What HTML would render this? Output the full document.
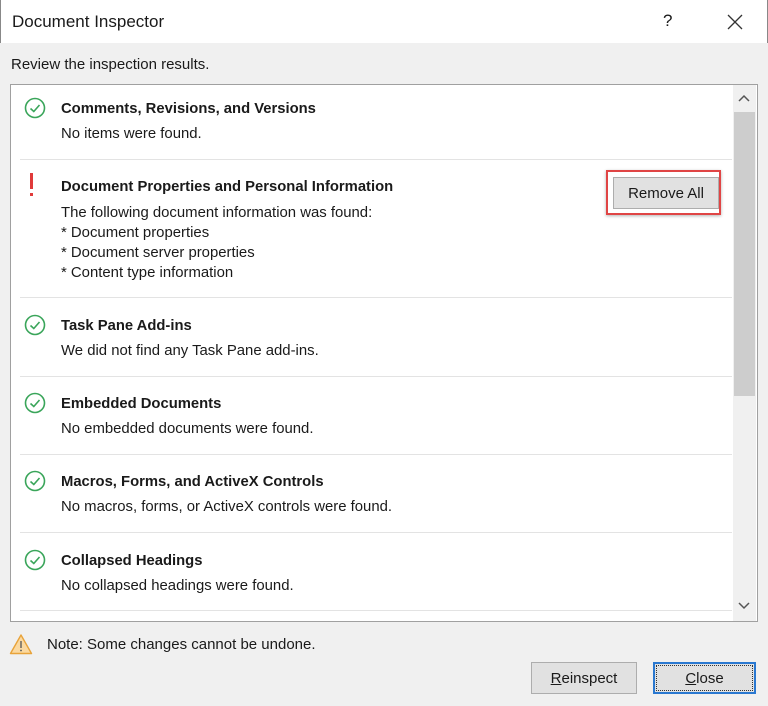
<!DOCTYPE html>
<html><head><style>
body{margin:0;width:768px;height:706px;background:#f0f0f0;font-family:"Liberation Sans",sans-serif;color:#1a1a1a;position:relative;overflow:hidden}
.a{position:absolute;white-space:nowrap}
.title{left:0;top:0;width:766px;height:43px;background:#fff;border-left:1px solid #888;border-right:1px solid #888}
.box{left:10px;top:84px;width:746px;height:536px;background:#fff;border:1px solid #a0a0a0}
.sb{left:733px;top:85px;width:23px;height:536px;background:#f0f0f0}
.thumb{left:734px;top:112px;width:21px;height:284px;background:#cdcdcd}
.sep{left:20px;width:712px;height:1px;background:#e3e3e3}
.h{left:61px;font-weight:bold;font-size:14.8px;margin-top:1px}
.t{left:61px;font-size:14.9px;line-height:20px;margin-top:1px}
.ck{left:24px}
.btn{background:#e1e1e1;border:1px solid #adadad;font-size:15px;text-align:center;box-sizing:border-box}
</style></head><body>
<div class="a title"></div>
<div class="a" style="left:12px;top:12px;font-size:17px">Document Inspector</div>
<div class="a" style="left:663px;top:11px;font-size:17px">?</div>
<svg class="a" style="left:727px;top:14px" width="16" height="16"><path d="M1 1L15 15M15 1L1 15" stroke="#333" stroke-width="1.3"/></svg>
<div class="a" style="left:11px;top:56px;font-size:15px">Review the inspection results.</div>
<div class="a box"></div>
<div class="a sb"></div>
<div class="a thumb"></div>
<svg class="a" style="left:738px;top:94px" width="12" height="8"><path d="M1 7L6 2L11 7" stroke="#555" fill="none" stroke-width="1.5"/></svg>
<svg class="a" style="left:738px;top:602px" width="12" height="8"><path d="M1 1L6 6L11 1" stroke="#555" fill="none" stroke-width="1.5"/></svg>

<svg class="a ck" style="top:97px" width="22" height="22"><circle cx="11" cy="11" r="9.5" fill="none" stroke="#3aa55a" stroke-width="1.6"/><path d="M6.5 11.5L9.8 14.5L15.5 8" fill="none" stroke="#3aa55a" stroke-width="1.6"/></svg>
<div class="a h" style="top:100px">Comments, Revisions, and Versions</div>
<div class="a t" style="top:123px">No items were found.</div>
<div class="a sep" style="top:159px"></div>

<div class="a" style="left:30px;top:173px;width:3px;height:16px;background:#e03a3a"></div>
<div class="a" style="left:30px;top:193px;width:3px;height:3px;background:#e03a3a"></div>
<div class="a h" style="top:178px">Document Properties and Personal Information</div>
<div class="a t" style="top:202px">The following document information was found:<br>* Document properties<br>* Document server properties<br>* Content type information</div>
<div class="a" style="left:606px;top:170px;width:115px;height:45px;border:2px solid #e04545;box-sizing:border-box;box-shadow:0 1px 3px rgba(0,0,0,.3)"></div>
<div class="a btn" style="left:613px;top:177px;width:106px;height:32px;line-height:32px">Remove All</div>
<div class="a sep" style="top:297px"></div>

<svg class="a ck" style="top:314px" width="22" height="22"><circle cx="11" cy="11" r="9.5" fill="none" stroke="#3aa55a" stroke-width="1.6"/><path d="M6.5 11.5L9.8 14.5L15.5 8" fill="none" stroke="#3aa55a" stroke-width="1.6"/></svg>
<div class="a h" style="top:317px">Task Pane Add-ins</div>
<div class="a t" style="top:340px">We did not find any Task Pane add-ins.</div>
<div class="a sep" style="top:376px"></div>

<svg class="a ck" style="top:392px" width="22" height="22"><circle cx="11" cy="11" r="9.5" fill="none" stroke="#3aa55a" stroke-width="1.6"/><path d="M6.5 11.5L9.8 14.5L15.5 8" fill="none" stroke="#3aa55a" stroke-width="1.6"/></svg>
<div class="a h" style="top:395px">Embedded Documents</div>
<div class="a t" style="top:418px">No embedded documents were found.</div>
<div class="a sep" style="top:454px"></div>

<svg class="a ck" style="top:470px" width="22" height="22"><circle cx="11" cy="11" r="9.5" fill="none" stroke="#3aa55a" stroke-width="1.6"/><path d="M6.5 11.5L9.8 14.5L15.5 8" fill="none" stroke="#3aa55a" stroke-width="1.6"/></svg>
<div class="a h" style="top:473px">Macros, Forms, and ActiveX Controls</div>
<div class="a t" style="top:496px">No macros, forms, or ActiveX controls were found.</div>
<div class="a sep" style="top:532px"></div>

<svg class="a ck" style="top:549px" width="22" height="22"><circle cx="11" cy="11" r="9.5" fill="none" stroke="#3aa55a" stroke-width="1.6"/><path d="M6.5 11.5L9.8 14.5L15.5 8" fill="none" stroke="#3aa55a" stroke-width="1.6"/></svg>
<div class="a h" style="top:552px">Collapsed Headings</div>
<div class="a t" style="top:575px">No collapsed headings were found.</div>
<div class="a sep" style="top:610px"></div>

<svg class="a" style="left:9px;top:633px" width="24" height="22"><path d="M12 2L22.5 20.5H1.5Z" fill="#fbd9a0" stroke="#e8a33a" stroke-width="1.4" stroke-linejoin="round"/><path d="M12 8V15" stroke="#555" stroke-width="1.3"/><circle cx="12" cy="17.5" r=".9" fill="#555"/></svg>
<div class="a" style="left:47px;top:636px;font-size:15px">Note: Some changes cannot be undone.</div>
<div class="a btn" style="left:531px;top:662px;width:106px;height:32px;line-height:32px"><u>R</u>einspect</div>
<div class="a btn" style="left:653px;top:662px;width:103px;height:32px;line-height:30px;border:2px solid #2a78d0;outline:1px dotted #333;outline-offset:-4px"><u>C</u>lose</div>
</body></html>
